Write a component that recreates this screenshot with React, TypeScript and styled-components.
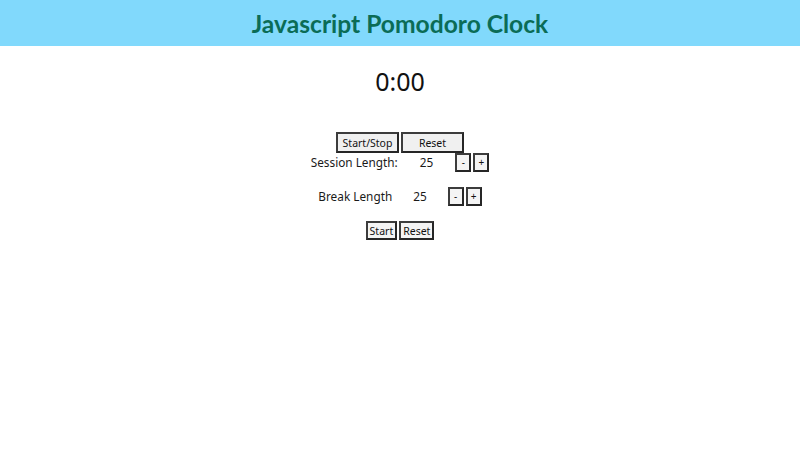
import styled, { createGlobalStyle } from "styled-components";

const GlobalStyle = createGlobalStyle`
  body {
    margin: 0;
    background: #ffffff;
    font-family: "Noto Sans", "Open Sans", sans-serif;
    color: #1a1a1a;
  }
`;

function SettingRow({ label, value, gap }: { label: string; value: number; gap: number }) {
  return (
    <Row>
      <Label>{label}</Label>
      <Value $gap={gap}>{value}</Value>
      <SmallButtons>
        <SmallButton>-</SmallButton>
        <SmallButton>+</SmallButton>
      </SmallButtons>
    </Row>
  );
}

function App() {
  return (
    <>
      <GlobalStyle />
      <Header>
        <Title>Javascript Pomodoro Clock</Title>
      </Header>
      <Main>
        <Timer>0:00</Timer>
        <ControlRow>
          <WideButton>Start/Stop</WideButton>
          <WideButton>Reset</WideButton>
        </ControlRow>
        <SettingRow label="Session Length:" value={25} gap={22} />
        <Spacer />
        <SettingRow label="Break Length" value={25} gap={21} />
        <ActionRow>
          <ActionButton>Start</ActionButton>
          <ActionButton>Reset</ActionButton>
        </ActionRow>
      </Main>
    </>
  );
}

const Header = styled.header`
  height: 46px;
  background: #81d9fc;
  display: flex;
  align-items: center;
  justify-content: center;
`;

const Title = styled.h1`
  margin: 0;
  font-family: Lato, "Open Sans", sans-serif;
  font-weight: 700;
  font-size: 24.6px;
  color: #0b6c56;
`;

const Main = styled.main`
  display: flex;
  flex-direction: column;
  align-items: center;
`;

const Timer = styled.div`
  margin-top: 18px;
  font-size: 25px;
  line-height: 34px;
  color: #111;
`;

const ControlRow = styled.div`
  margin-top: 34px;
  display: flex;
  gap: 2px;
`;

const BaseButton = styled.button`
  font-family: "Noto Sans", "Open Sans", sans-serif;
  background: #f0f0f0;
  color: #111;
  border: 2px solid #3c3c3c;
  border-right-color: #262626;
  border-bottom-color: #262626;
  padding: 0;
  margin: 0;
  display: flex;
  align-items: center;
  justify-content: center;
`;

const WideButton = styled(BaseButton)`
  width: 63px;
  height: 21px;
  font-size: 10.5px;
`;

const Row = styled.div`
  display: flex;
  align-items: center;
  height: 18px;
  font-size: 11.8px;
`;

const Label = styled.span``;

const Value = styled.span<{ $gap: number }>`
  margin: 0 ${(p) => p.$gap}px;
`;

const SmallButtons = styled.div`
  display: flex;
  gap: 2px;
`;

const SmallButton = styled(BaseButton)`
  width: 16px;
  height: 19px;
  font-size: 10px;
  background: #f4f4f4;
`;

const Spacer = styled.div`
  height: 16px;
`;

const ActionRow = styled.div`
  margin-top: 16px;
  display: flex;
  gap: 2px;
`;

const ActionButton = styled(BaseButton)`
  height: 19px;
  padding: 0 2px;
  font-size: 10.5px;
  background: #f4f4f4;
`;

export default App;
